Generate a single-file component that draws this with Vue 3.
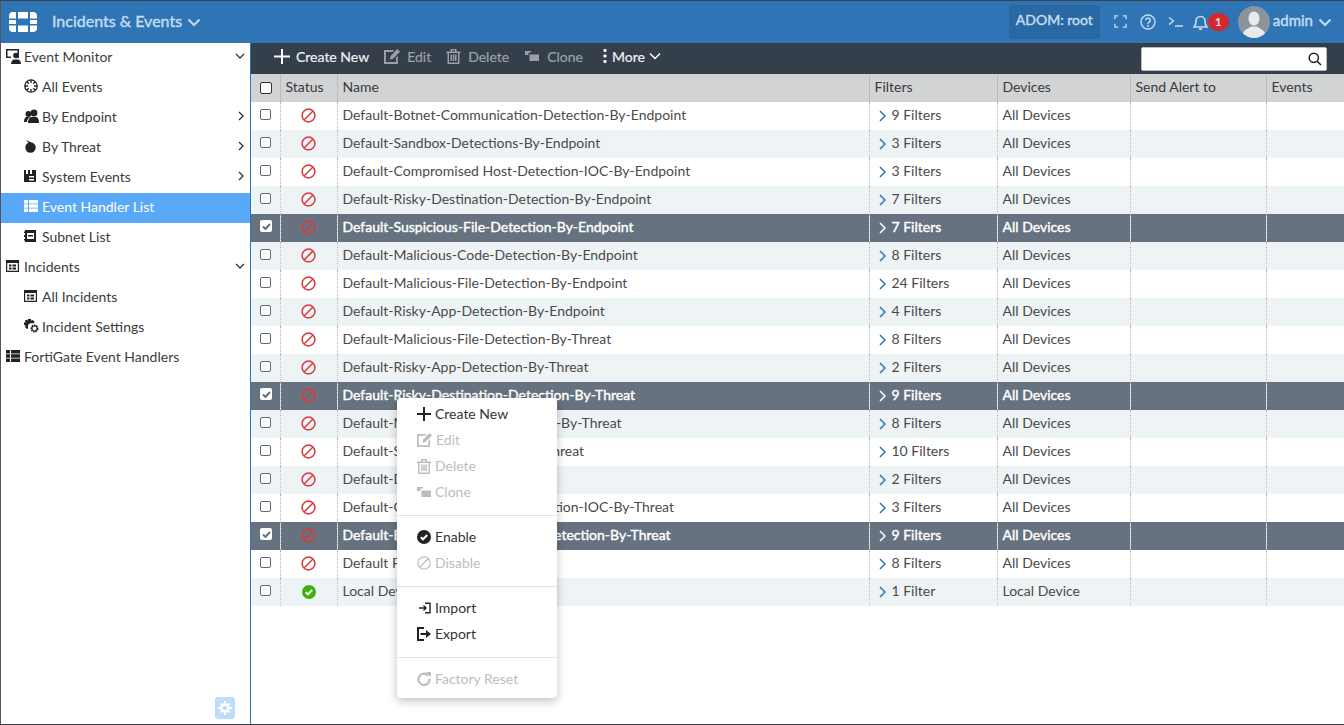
<script setup>
const rows = [
  { name: 'Default-Botnet-Communication-Detection-By-Endpoint', filters: '9 Filters', devices: 'All Devices' },
  { name: 'Default-Sandbox-Detections-By-Endpoint', filters: '3 Filters', devices: 'All Devices' },
  { name: 'Default-Compromised Host-Detection-IOC-By-Endpoint', filters: '3 Filters', devices: 'All Devices' },
  { name: 'Default-Risky-Destination-Detection-By-Endpoint', filters: '7 Filters', devices: 'All Devices' },
  { name: 'Default-Suspicious-File-Detection-By-Endpoint', filters: '7 Filters', devices: 'All Devices', selected: true },
  { name: 'Default-Malicious-Code-Detection-By-Endpoint', filters: '8 Filters', devices: 'All Devices' },
  { name: 'Default-Malicious-File-Detection-By-Endpoint', filters: '24 Filters', devices: 'All Devices' },
  { name: 'Default-Risky-App-Detection-By-Endpoint', filters: '4 Filters', devices: 'All Devices' },
  { name: 'Default-Malicious-File-Detection-By-Threat', filters: '8 Filters', devices: 'All Devices' },
  { name: 'Default-Risky-App-Detection-By-Threat', filters: '2 Filters', devices: 'All Devices' },
  { name: 'Default-Risky-Destination-Detection-By-Threat', filters: '9 Filters', devices: 'All Devices', selected: true },
  { name: 'Default-Malicious-Code-Detection-By-Threat', filters: '8 Filters', devices: 'All Devices' },
  { name: 'Default-Sandbox-Detections-By-Threat', filters: '10 Filters', devices: 'All Devices' },
  { name: 'Default-DoS-Attack-By-Threat', filters: '2 Filters', devices: 'All Devices' },
  { name: 'Default-Compromised Host-Detection-IOC-By-Threat', filters: '3 Filters', devices: 'All Devices' },
  { name: 'Default-Exploit-Communication-Detection-By-Threat', filters: '9 Filters', devices: 'All Devices', selected: true },
  { name: 'Default FOS Events', filters: '8 Filters', devices: 'All Devices' },
  { name: 'Local Device Event Handler', filters: '1 Filter', devices: 'Local Device', enabled: true },
]
</script>

<template>
  <div class="app">
    <header class="topbar">
      <svg class="logo" width="28" height="20" viewBox="0 0 28 20" fill="#fff">
        <path d="M0 6.500V4a4 4 0 0 1 4-4h3v6.500zM9 0h10v6.500H9zM21 0h3a4 4 0 0 1 4 4v2.500h-7zM0 8h7v4H0zM21 8h7v4h-7zM0 13.500h7V20H4a4 4 0 0 1-4-4zM9 13.500h10V20H9zM21 13.500h7V16a4 4 0 0 1-4 4h-3z" />
      </svg>
      <div class="app-title">Incidents &amp; Events</div>
      <svg class="caret" width="14" height="9" viewBox="0 0 14 9"><path d="M1.500 1.500 7 7l5.500-5.500" /></svg>
      <div class="spacer"></div>
      <div class="adom">ADOM: root</div>
      <svg class="top-icon full" width="13" height="13" viewBox="0 0 14 14"><path d="M1 4.500V1h3.500M9.500 1H13v3.500M13 9.500V13H9.500M4.500 13H1V9.500" stroke-width="1.400" /></svg>
      <svg class="top-icon help" width="16" height="16" viewBox="0 0 16 16">
        <circle cx="8" cy="8" r="7" stroke-width="1.400" />
        <path d="M5.800 6.200a2.200 2.200 0 1 1 3.400 1.900c-.8.500-1.200.9-1.200 1.700" stroke-width="1.500" />
        <circle cx="8" cy="12" r="1" class="solid" />
      </svg>
      <svg class="top-icon term" width="16" height="12" viewBox="0 0 16 12"><path d="M1 1.500 5.500 5 1 8.500M7 10h8" stroke-width="1.500" /></svg>
      <div class="bell-wrap">
        <svg width="15" height="17" viewBox="0 0 15 17" class="top-icon"><path d="M1 13c1.500-1.500 2-3 2-6a4.500 4.500 0 0 1 9 0c0 3 .5 4.500 2 6zM6 15.200h3" stroke-width="1.700" /></svg>
        <span class="badge">1</span>
      </div>
      <div class="avatar">
        <svg width="32" height="32" viewBox="0 0 32 32" fill="#e8eaec">
          <ellipse cx="16" cy="12.500" rx="5.500" ry="7" />
          <path d="M5 28c1-5 6-5.500 8-7.500h6c2 2 7 2.500 8 7.500a16 16 0 0 1-22 0z" />
        </svg>
      </div>
      <div class="user">admin</div>
      <svg class="caret" width="14" height="9" viewBox="0 0 14 9"><path d="M1.500 1.500 7 7l5.500-5.500" /></svg>
    </header>

    <div class="body">
      <nav class="sidebar">
        <div class="nav-item top-level">
          <span class="slot">
            <svg width="16" height="16" viewBox="0 0 16 16" fill="#222">
              <path d="M0 1h13v9h-1.500V2.500h-10v6H5V10H0z" />
              <circle cx="10" cy="7.500" r="2.800" />
              <path d="M5 16c0-3 2-4.500 3-4.500h4c1 0 3 1.500 3 4.500z" />
            </svg>
          </span>
          <span>Event Monitor</span>
          <svg class="chev" width="10" height="6" viewBox="0 0 10 6"><path d="M1 1l4 4 4-4" /></svg>
        </div>
        <div class="nav-item sub">
          <span class="slot">
            <svg width="14" height="14" viewBox="0 0 14 14">
              <circle cx="7" cy="7" r="6.200" fill="none" stroke="#222" stroke-width="1.300" />
              <path d="M7 1v3M7 10v3M1 7h3M10 7h3M2.800 2.800l2 2M9.200 9.200l2 2M11.200 2.800l-2 2M4.800 9.200l-2 2" stroke="#222" stroke-width="1.300" />
            </svg>
          </span>
          <span>All Events</span>
        </div>
        <div class="nav-item sub">
          <span class="slot">
            <svg width="15" height="14" viewBox="0 0 15 14" fill="#222">
              <circle cx="10" cy="4" r="3.400" />
              <circle cx="4.500" cy="5" r="3" />
              <path d="M4 14c0-4 2-6 3.500-6h5c1 0 2.500 2 2.500 6zM0 13c0-3 1-5 2.500-5H6c-2 1-3 3-3 5z" />
            </svg>
          </span>
          <span>By Endpoint</span>
          <svg class="chev-r" width="6" height="10" viewBox="0 0 6 10"><path d="M1 1l4 4-4 4" /></svg>
        </div>
        <div class="nav-item sub">
          <span class="slot">
            <svg width="14" height="14" viewBox="0 0 14 14" fill="#222">
              <circle cx="6.500" cy="8.500" r="5.200" />
              <path d="M2 1 7.500 3.500 5.500 5z" />
            </svg>
          </span>
          <span>By Threat</span>
          <svg class="chev-r" width="6" height="10" viewBox="0 0 6 10"><path d="M1 1l4 4-4 4" /></svg>
        </div>
        <div class="nav-item sub">
          <span class="slot">
            <svg width="12" height="12" viewBox="0 0 12 12" fill="#222">
              <path d="M0 0h2v4h2V0h2v4h2V0h4v12H0zM5 6v1.500h5V6zM5 9v1.500h5V9z" fill-rule="evenodd" />
            </svg>
          </span>
          <span>System Events</span>
          <svg class="chev-r" width="6" height="10" viewBox="0 0 6 10"><path d="M1 1l4 4-4 4" /></svg>
        </div>
        <div class="nav-item sub active">
          <span class="slot">
            <svg width="14" height="12" viewBox="0 0 14 12" fill="#fff">
              <path d="M0 0h4v3.500H0zM5 0h9v3.500H5zM0 4.300h4v3.400H0zM5 4.300h9v3.400H5zM0 8.500h4V12H0zM5 8.500h9V12H5z" />
            </svg>
          </span>
          <span>Event Handler List</span>
        </div>
        <div class="nav-item sub">
          <span class="slot">
            <svg width="12" height="12" viewBox="0 0 12 12" fill="#222">
              <path d="M1 0h11v12H1v-1.500H0V9h1V7H0V5h1V3H0V1.500h1zM3 3v6h7V3zM4 5h5v1.500H4z" fill-rule="evenodd" />
            </svg>
          </span>
          <span>Subnet List</span>
        </div>
        <div class="nav-item top-level">
          <span class="slot">
            <svg width="13" height="12" viewBox="0 0 13 12" fill="#222">
              <path d="M0 0h13v12H0zM1.200 3v7.800h10.600V3zM3 4.500h2.500v2H3zM6.500 4.500H10v2H6.500zM3 7.500h2.500v2H3zM6.500 7.500H10v2H6.500z" fill-rule="evenodd" />
            </svg>
          </span>
          <span>Incidents</span>
          <svg class="chev" width="10" height="6" viewBox="0 0 10 6"><path d="M1 1l4 4 4-4" /></svg>
        </div>
        <div class="nav-item sub">
          <span class="slot">
            <svg width="13" height="12" viewBox="0 0 13 12" fill="#222">
              <path d="M0 0h13v12H0zM1.200 3v7.800h10.600V3zM3 4.500h2.500v2H3zM6.500 4.500H10v2H6.500zM3 7.500h2.500v2H3zM6.500 7.500H10v2H6.500z" fill-rule="evenodd" />
            </svg>
          </span>
          <span>All Incidents</span>
        </div>
        <div class="nav-item sub">
          <span class="slot">
            <svg width="15" height="14" viewBox="0 0 15 14" fill="#222">
              <path d="M4 0h3l.3 1.700 1.500-.8 2 2-1 1.400H7a3 3 0 0 0-3 3v2.200l-1 .5-2-2 .8-1.500L0 6V3.500l1.700-.3-.8-1.500 1-1 1.600.8z" />
              <circle cx="10.500" cy="9.500" r="3" fill="none" stroke="#222" stroke-width="2" stroke-dasharray="1.500 .7" />
              <circle cx="10.500" cy="9.500" r="2.700" fill="none" stroke="#222" stroke-width="1" />
            </svg>
          </span>
          <span>Incident Settings</span>
        </div>
        <div class="nav-item top-level">
          <span class="slot">
            <svg width="14" height="12" viewBox="0 0 14 12" fill="#222">
              <path d="M0 0h4v3.500H0zM5 0h9v3.500H5zM0 4.300h4v3.400H0zM5 4.300h9v3.400H5zM0 8.500h4V12H0zM5 8.500h9V12H5z" />
            </svg>
          </span>
          <span>FortiGate Event Handlers</span>
        </div>
        <div class="side-spacer"></div>
        <div class="side-foot">
          <div class="gear-btn">
            <svg width="14" height="14" viewBox="0 0 14 14" fill="#fff">
              <circle cx="7" cy="7" r="3.500" fill="none" stroke="#fff" stroke-width="2.500" />
              <path d="M6 0h2v2.500H6zM6 11.500h2V14H6zM0 6h2.500v2H0zM11.500 6H14v2h-2.500zM1.800 3.200l1.400-1.400L5 3.600 3.600 5zM9 10.400 10.400 9l1.800 1.800-1.400 1.400zM10.800 1.800l1.400 1.400L10.400 5 9 3.600zM3.600 9 5 10.400l-1.800 1.800-1.400-1.400z" />
            </svg>
          </div>
        </div>
      </nav>

      <main class="content">
        <div class="toolbar">
          <div class="tool primary">
            <svg width="16" height="15" viewBox="0 0 16 15"><path d="M7 0h2v6.500h7v2H9V15H7V8.500H0v-2h7z" fill="#fff" /></svg>
            <span>Create New</span>
          </div>
          <div class="tool muted">
            <svg width="16" height="15" viewBox="0 0 15 14" fill="#9aa1a8">
              <path d="M0 1h9.500L8 2.800H1.800v9.400h9.400V8L13 6.300V14H0z" />
              <path d="M12.500 0 15 2.500 8.500 9l-3 .7.700-3.200z" />
            </svg>
            <span>Edit</span>
          </div>
          <div class="tool muted">
            <svg width="15" height="15" viewBox="0 0 14 15" fill="#9aa1a8">
              <path d="M4 0h6v2.500h4V4h-1v11H1V4H0V2.500h4zM5.500 1.300v1.200h3V1.300zM2.500 4v9.500h9V4zM4 5.500h1.500v6.500H4zM6.300 5.500h1.500v6.500H6.300zM8.500 5.500H10v6.500H8.500z" fill-rule="evenodd" />
            </svg>
            <span>Delete</span>
          </div>
          <div class="tool muted">
            <svg width="16" height="11" viewBox="-1 0 16 11" fill="#9aa1a8">
              <path d="M0 0h6v1.500H3.500v2.500H0zM4.500 3.500H14V10H4.500z" />
            </svg>
            <span>Clone</span>
          </div>
          <div class="tool primary more">
            <svg width="4" height="14" viewBox="0 0 4 14" fill="#fff"><rect x="0.500" y="0" width="3" height="3" rx="1" /><rect x="0.500" y="5.500" width="3" height="3" rx="1" /><rect x="0.500" y="11" width="3" height="3" rx="1" /></svg>
            <span class="more-label">More</span>
            <svg width="12" height="8" viewBox="0 0 12 8"><path d="M1 1.500l5 5 5-5" /></svg>
          </div>
          <div class="spacer"></div>
          <div class="search">
            <svg width="14" height="14" viewBox="0 0 14 14"><circle cx="5.800" cy="5.800" r="4.600" /><path d="M9.200 9.200 13 13" stroke-width="2" /></svg>
          </div>
        </div>

        <table class="grid">
          <colgroup>
            <col style="width: 29px" />
            <col style="width: 57px" />
            <col style="width: 532px" />
            <col style="width: 128px" />
            <col style="width: 133px" />
            <col style="width: 136px" />
            <col />
          </colgroup>
          <thead>
            <tr>
              <th class="check-col"><span class="box head-box"></span></th>
              <th>Status</th>
              <th>Name</th>
              <th>Filters</th>
              <th>Devices</th>
              <th>Send Alert to</th>
              <th>Events</th>
            </tr>
          </thead>
          <tbody>
            <tr v-for="row in rows" :key="row.name" :class="{ selected: row.selected }">
              <td class="check-col">
                <span class="box">
                  <svg v-if="row.selected" width="9" height="7" viewBox="0 0 9 7"><path d="M1 3.500 3.500 6 8 1" /></svg>
                </span>
              </td>
              <td class="status-col">
                <svg v-if="row.enabled" class="status-icon" width="14" height="14" viewBox="0 0 14 14">
                  <circle cx="7" cy="7" r="7" fill="#3fb20e" />
                  <path d="M3.800 7.200 6 9.300l4.200-4.300" fill="none" stroke="#fff" stroke-width="2" />
                </svg>
                <svg v-else class="status-icon" width="15" height="15" viewBox="0 0 15 15" fill="none" stroke="#d8383c" stroke-width="1.500">
                  <circle cx="7.500" cy="7.500" r="6.400" />
                  <path d="M3 12 12 3" />
                </svg>
              </td>
              <td>{{ row.name }}</td>
              <td>
                <svg class="expand" width="7" height="12" viewBox="0 0 7 12"><path d="M1 1l5 5-5 5" /></svg>{{ row.filters }}
              </td>
              <td>{{ row.devices }}</td>
              <td></td>
              <td></td>
            </tr>
          </tbody>
        </table>

        <div class="menu">
          <div class="menu-item">
            <svg width="14" height="14" viewBox="0 0 14 14" fill="#222"><path d="M6 0h2v6h6v2H8v6H6V8H0V6h6z" /></svg>
            <span>Create New</span>
          </div>
          <div class="menu-item off">
            <svg width="15" height="14" viewBox="0 0 15 14" fill="#bdbdbd">
              <path d="M0 1h9.500L8 2.800H1.800v9.400h9.400V8L13 6.300V14H0z" />
              <path d="M12.500 0 15 2.500 8.500 9l-3 .7.700-3.200z" />
            </svg>
            <span>Edit</span>
          </div>
          <div class="menu-item off">
            <svg width="14" height="15" viewBox="0 0 14 15" fill="#bdbdbd">
              <path d="M4 0h6v2.500h4V4h-1v11H1V4H0V2.500h4zM5.500 1.300v1.200h3V1.300zM2.500 4v9.500h9V4zM4 5.500h1.500v6.500H4zM6.300 5.500h1.500v6.500H6.300zM8.500 5.500H10v6.500H8.500z" fill-rule="evenodd" />
            </svg>
            <span>Delete</span>
          </div>
          <div class="menu-item off">
            <svg width="14" height="11" viewBox="0 0 14 11" fill="#bdbdbd">
              <path d="M0 0h6v1.500H3.500v2.500H0zM4.500 3.500H14V10H4.500z" />
            </svg>
            <span>Clone</span>
          </div>
          <div class="menu-sep"></div>
          <div class="menu-item">
            <svg width="14" height="14" viewBox="0 0 14 14">
              <circle cx="7" cy="7" r="7" fill="#222" />
              <path d="M3.800 7.200 6 9.300l4.200-4.300" fill="none" stroke="#fff" stroke-width="2" />
            </svg>
            <span>Enable</span>
          </div>
          <div class="menu-item off">
            <svg width="14" height="14" viewBox="0 0 14 14" fill="none" stroke="#bdbdbd" stroke-width="1.300">
              <circle cx="7" cy="7" r="6.200" />
              <path d="M2.800 11.200l8.400-8.400" />
            </svg>
            <span>Disable</span>
          </div>
          <div class="menu-sep"></div>
          <div class="menu-item">
            <svg width="14" height="12" viewBox="0 0 14 12" fill="none" stroke="#222" stroke-width="1.400">
              <path d="M8 1.200h5v9.600H8" />
              <path d="M2 6h7M6.500 3.500 9 6l-2.500 2.500" />
            </svg>
            <span>Import</span>
          </div>
          <div class="menu-item">
            <svg width="14" height="14" viewBox="0 0 14 14" fill="#222">
              <path d="M0 0h7v2H2v10h5v2H0z" />
              <path d="M3.500 6H9V3l5 4-5 4V8H3.500z" />
            </svg>
            <span>Export</span>
          </div>
          <div class="menu-sep"></div>
          <div class="menu-item off">
            <svg width="14" height="14" viewBox="0 0 14 14" fill="none" stroke="#bdbdbd" stroke-width="2.200">
              <path d="M11.300 3.700A5.600 5.600 0 1 0 12.600 7" />
              <path d="M9 0h5v5z" fill="#bdbdbd" stroke="none" />
            </svg>
            <span>Factory Reset</span>
          </div>
        </div>
      </main>
    </div>
  </div>
</template>

<style>
html,
body {
  margin: 0;
  padding: 0;
  background: #fff;
}
</style>

<style scoped>
.app {
  width: 1344px;
  height: 725px;
  display: flex;
  flex-direction: column;
  overflow: hidden;
  box-sizing: border-box;
  border-top: 1px solid #3a4149;
  border-bottom: 1px solid #3a4149;
  border-left: 1px solid #555;
  font-family: Lato, "Liberation Sans", sans-serif;
  font-size: 14px;
  color: #4a4a4a;
  background: #fff;
}

.topbar {
  height: 42px;
  flex: none;
  display: flex;
  align-items: center;
  background: #2f75b6;
  color: #c5ddf2;
  padding-left: 8px;
}
.logo {
  flex: none;
}
.app-title {
  margin-left: 15px;
  margin-bottom: 4px;
  font-size: 16px;
  -webkit-text-stroke: 0.4px #c5ddf2;
}
.caret {
  margin-left: 5px;
  flex: none;
}
.caret path {
  fill: none;
  stroke: #c5ddf2;
  stroke-width: 2;
}
.spacer {
  flex: 1;
}
.adom {
  box-sizing: border-box;
  background: #2968a3;
  width: 91px;
  height: 34px;
  line-height: 30px;
  padding: 0 0 4px;
  text-align: center;
  border-radius: 4px;
  -webkit-text-stroke: 0.4px #c5ddf2;
}
.top-icon {
  flex: none;
}
.top-icon path,
.top-icon circle {
  fill: none;
  stroke: #c5ddf2;
}
.top-icon circle.solid {
  fill: #c5ddf2;
  stroke: none;
}
.full {
  margin-left: 14px;
  margin-bottom: 2px;
}
.help {
  margin-left: 13px;
}
.term {
  margin-left: 12px;
}
.bell-wrap {
  display: flex;
  align-items: center;
  margin-left: 9px;
  position: relative;
  width: 36px;
}
.badge {
  position: absolute;
  left: 15px;
  top: -1px;
  width: 21px;
  height: 18px;
  border-radius: 9px;
  background: #d3282e;
  color: #f5dcdc;
  font-size: 12px;
  font-weight: 700;
  line-height: 17px;
  text-align: center;
}
.avatar {
  margin-left: 9px;
  width: 32px;
  height: 32px;
  border-radius: 50%;
  background: #8b949c;
  overflow: hidden;
  flex: none;
}
.user {
  margin-left: 3px;
  margin-bottom: 4px;
  font-size: 15px;
  -webkit-text-stroke: 0.4px #c5ddf2;
}
.user + .caret {
  margin-right: 12px;
}

.body {
  flex: 1;
  min-height: 0;
  display: flex;
}

.sidebar {
  width: 250px;
  flex: none;
  box-sizing: border-box;
  border-right: 1px solid #2f75b6;
  display: flex;
  flex-direction: column;
  color: #3c3c3c;
}
.nav-item {
  height: 30px;
  flex: none;
  box-sizing: border-box;
  padding-bottom: 4px;
  display: flex;
  align-items: center;
  position: relative;
  white-space: nowrap;
}
.top-level {
  padding-left: 5px;
}
.sub {
  padding-left: 23px;
}
.slot {
  width: 18px;
  flex: none;
  display: flex;
  align-items: center;
}
.active {
  background: #5aa9f8;
  color: #fff;
}
.chev {
  position: absolute;
  right: 5px;
  top: 10px;
}
.chev-r {
  position: absolute;
  right: 6px;
  top: 8px;
}
.chev path,
.chev-r path {
  fill: none;
  stroke: #333;
  stroke-width: 1.300;
}
.side-spacer {
  flex: 1;
}
.side-foot {
  display: flex;
  justify-content: flex-end;
  padding: 0 15px 5px 0;
}
.gear-btn {
  width: 20px;
  height: 22px;
  background: #bfdcfb;
  border-radius: 3px;
  display: flex;
  align-items: center;
  justify-content: center;
}

.content {
  flex: 1;
  min-width: 0;
  position: relative;
}

.toolbar {
  height: 31px;
  box-sizing: border-box;
  padding: 0 0 5px 23px;
  background: #343f4b;
  display: flex;
  align-items: center;
}
.tool {
  display: flex;
  align-items: center;
  gap: 7px;
  margin-right: 15px;
  -webkit-text-stroke: 0.2px currentColor;
}
.tool.primary {
  gap: 6px;
}
.primary {
  color: #f2f2f2;
}
.muted {
  color: #9aa1a8;
}
.tool.more {
  margin-left: 5px;
  margin-right: 0;
  gap: 4px;
}
.more-label {
  margin-left: 1px;
}
.more svg:last-child path {
  fill: none;
  stroke: #fff;
  stroke-width: 1.500;
}
.search {
  width: 186px;
  height: 24px;
  margin-right: 17px;
  margin-top: 5px;
  box-sizing: border-box;
  background: #fff;
  border: 1px solid #bbb;
  border-radius: 2px;
  display: flex;
  align-items: center;
  justify-content: flex-end;
  padding-right: 4px;
}
.search circle,
.search path {
  fill: none;
  stroke: #222;
  stroke-width: 1.500;
}

.grid {
  width: 1093px;
  table-layout: fixed;
  border-collapse: collapse;
}
.grid th {
  height: 28px;
  padding: 0 0 4px 5px;
  box-sizing: border-box;
  background: #d2d3d5;
  color: #3a3a3a;
  font-weight: 400;
  text-align: left;
  border-left: 1px solid #bcbcbc;
}
.grid td {
  height: 28px;
  padding: 0 0 4px 5px;
  box-sizing: border-box;
  border-left: 1px dotted #b5b5b5;
  white-space: nowrap;
  overflow: hidden;
}
.grid th:first-child,
.grid td:first-child {
  border-left: none;
}
.grid tbody tr:nth-child(even) {
  background: #eef3f6;
}
.grid tbody tr.selected {
  background: #66727f;
  color: #fff;
  -webkit-text-stroke: 0.4px #fff;
}
.check-col {
  padding-left: 9px !important;
}
.box {
  display: block;
  box-sizing: border-box;
  width: 11px;
  height: 11px;
  border: 1px solid #5f6b78;
  border-radius: 2px;
  background: #fff;
}
.head-box {
  width: 12px;
  height: 12px;
  border: 1.500px solid #333;
  margin-top: 4px;
}
.selected .box {
  width: 12px;
  height: 12px;
  border: none;
  display: flex;
  align-items: center;
  justify-content: center;
}
.box path {
  fill: none;
  stroke: #66727f;
  stroke-width: 2;
}
.status-col {
  text-align: center;
  padding-left: 0 !important;
}
.status-icon {
  display: inline-block;
  vertical-align: middle;
}
.expand {
  margin: 0 6px 0 4px;
  vertical-align: -2px;
}
.expand path {
  fill: none;
  stroke: #2f75b6;
  stroke-width: 1.500;
}
.selected .expand path {
  stroke: #fff;
}

.menu {
  position: absolute;
  left: 146px;
  top: 355px;
  width: 160px;
  height: 300px;
  box-sizing: border-box;
  padding: 3px 0;
  background: #fff;
  border-radius: 4px;
  box-shadow: 0 3px 10px rgba(0, 0, 0, 0.25);
  color: #333;
}
.menu-item {
  height: 26px;
  display: flex;
  align-items: center;
  gap: 4px;
  padding-left: 20px;
}
.menu-item span {
  margin-bottom: 2px;
}
.menu-item svg {
  flex: none;
}
.off {
  color: #bdbdbd;
}
.menu-sep {
  height: 1px;
  background: #e4e4e4;
  margin: 10px 0 8px;
}
</style>
